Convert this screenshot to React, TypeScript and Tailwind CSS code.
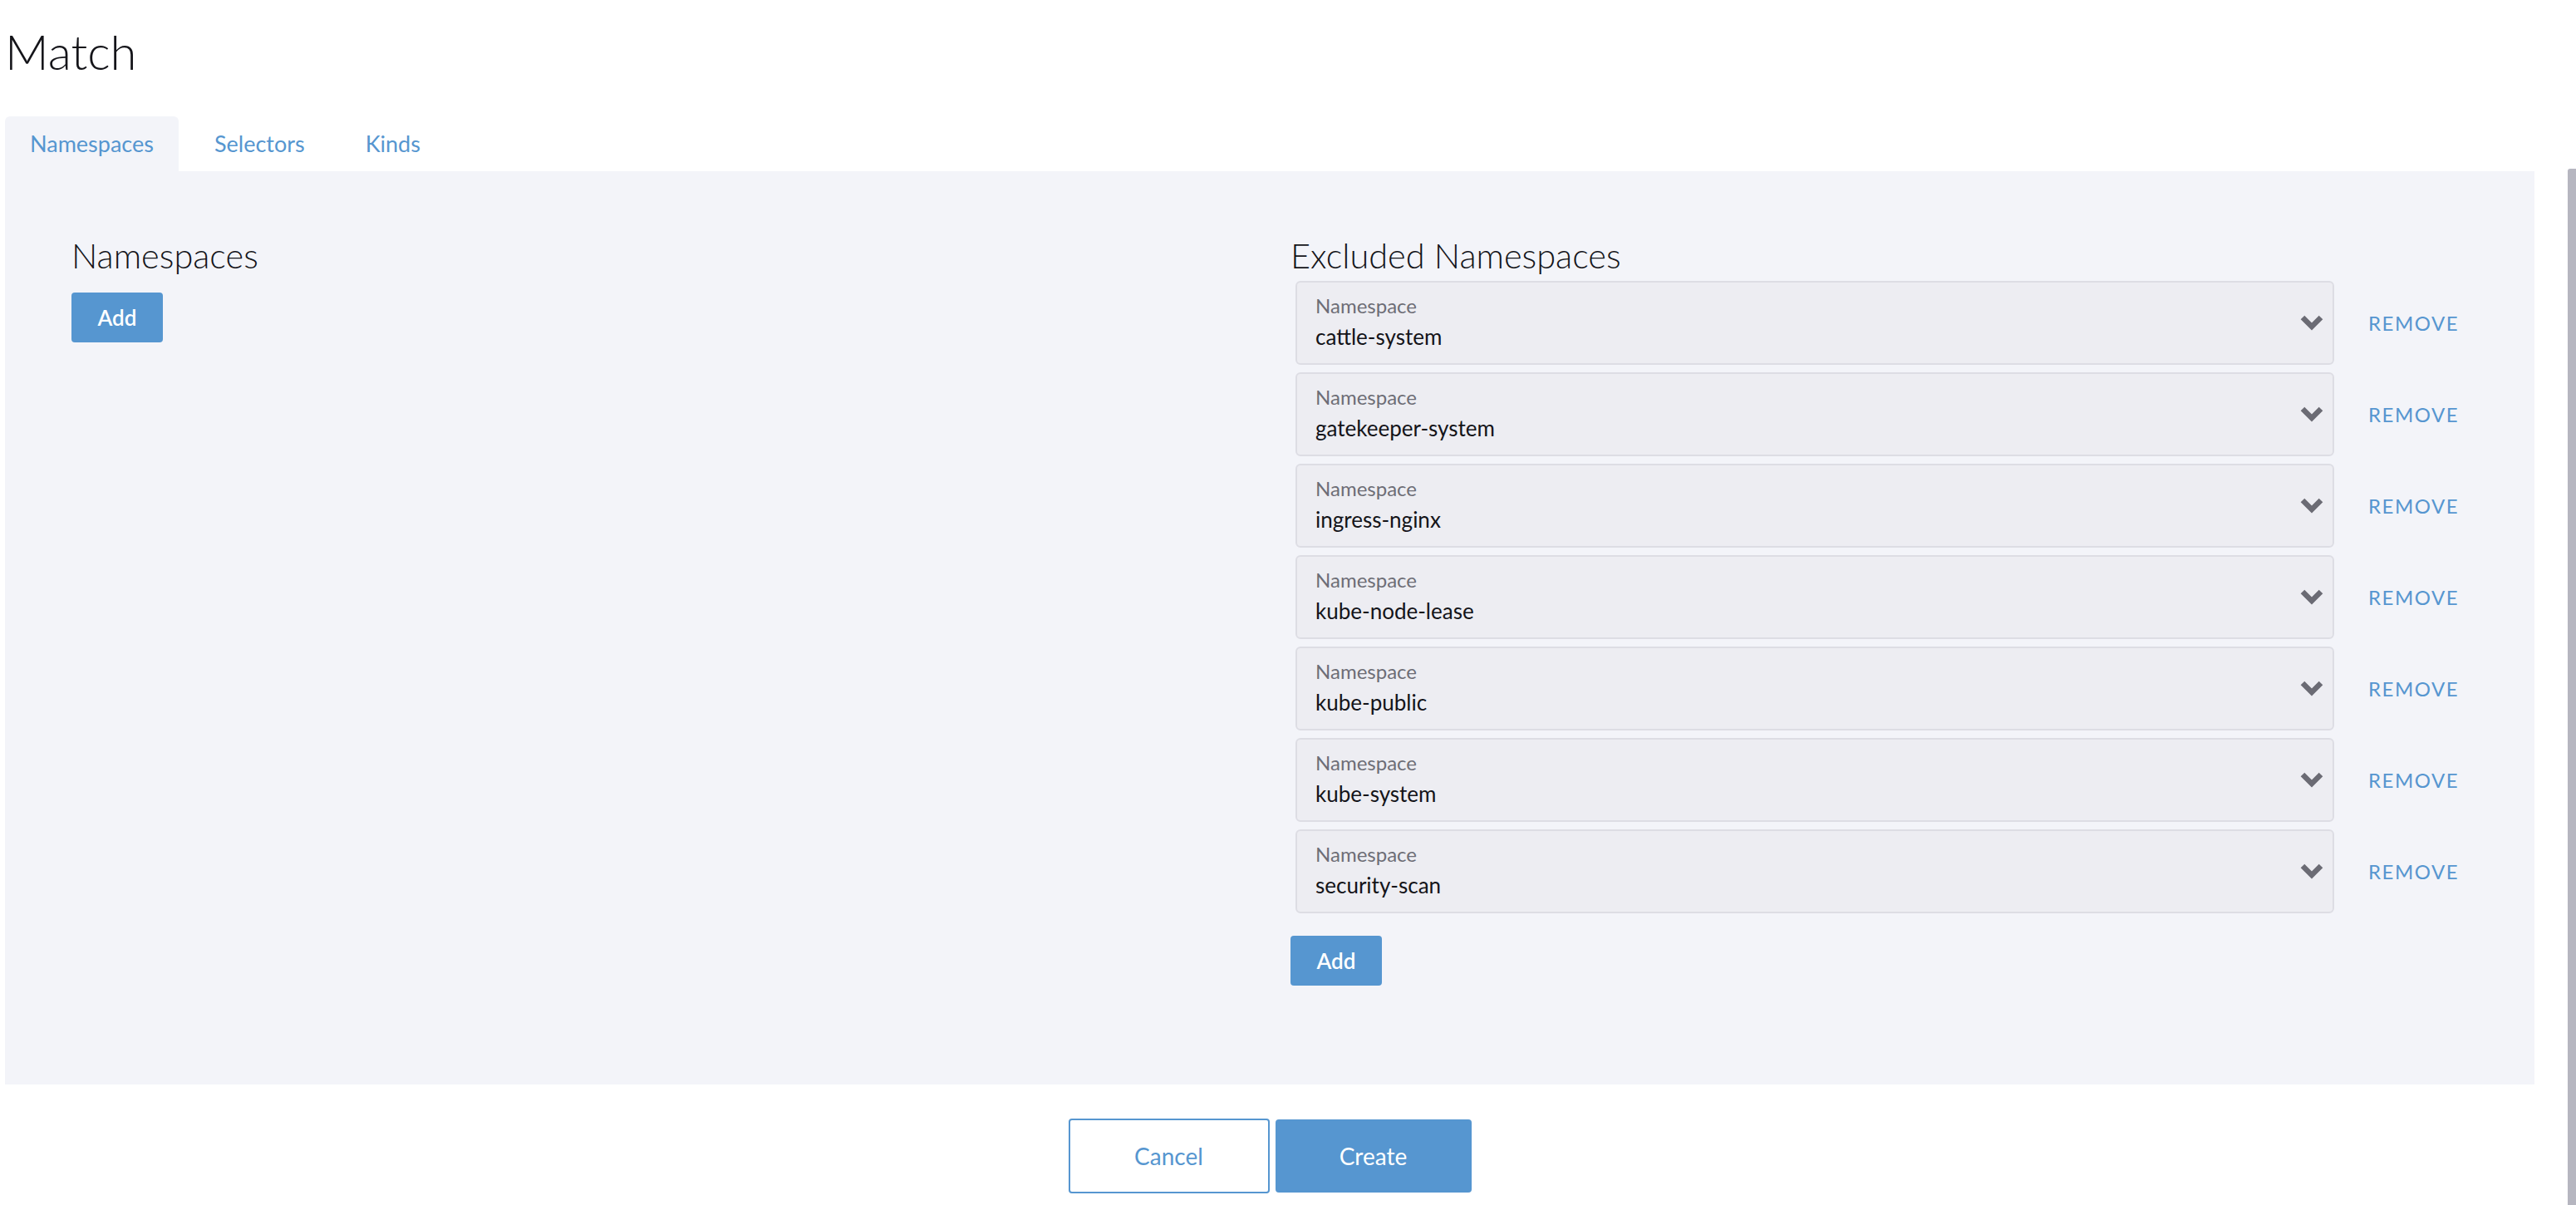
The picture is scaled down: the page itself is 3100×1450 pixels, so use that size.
import { useState } from "react";

const excluded = [
  "cattle-system",
  "gatekeeper-system",
  "ingress-nginx",
  "kube-node-lease",
  "kube-public",
  "kube-system",
  "security-scan",
];

const tabs = ["Namespaces", "Selectors", "Kinds"];

const Chevron = () => (
  <svg width="28" height="19" viewBox="0 0 28 19" fill="none">
    <polyline
      points="3,3 14,14 25,3"
      stroke="#6b6b74"
      strokeWidth="6.5"
      strokeLinecap="butt"
      strokeLinejoin="miter"
    />
  </svg>
);

const NamespaceRow = ({ value }: { value: string }) => (
  <div className="mt-[9px] flex first:mt-0">
    <div className="ml-[6px] flex h-[101px] flex-1 items-center justify-between rounded-[6px] border-2 border-[#dddde4] bg-[#ededf2] pl-[22px] pr-[11px]">
      <div className="flex h-full flex-col pt-[13px]">
        <span className="text-[24px] leading-[29px] text-[#6d6d76]">Namespace</span>
        <span className="mt-[8px] text-[26px] leading-[31px] text-[#141419]">{value}</span>
      </div>
      <Chevron />
    </div>
    <div className="flex w-[161px] items-center pl-[41px]">
      <button className="text-[24px] uppercase tracking-[1.5px] text-[#5696d0]">Remove</button>
    </div>
  </div>
);

const App = () => {
  const [activeTab, setActiveTab] = useState("Namespaces");

  return (
    <div className="flex h-[1450px] w-full bg-white font-['Lato',sans-serif]">
      <main className="flex-1 pl-[6px] pr-[40px]">
        <h1 className="mt-[27px] text-[58px] font-light leading-[70px] text-[#141419]">Match</h1>

        <div className="mt-[43px] flex gap-[13px]">
          {tabs.map((tab) => (
            <button
              key={tab}
              onClick={() => setActiveTab(tab)}
              className={
                "flex h-[66px] items-center rounded-t-[6px] px-[30px] text-[27px] text-[#5696d0] " +
                (activeTab === tab ? "bg-[#f3f4f9]" : "bg-transparent")
              }
            >
              {tab}
            </button>
          ))}
        </div>

        <div className="grid h-[1099px] grid-cols-2 gap-x-[50px] bg-[#f3f4f9] px-[80px] pt-[77px]">
          <div>
            <h2 className="text-[41.5px] font-light leading-[49px] text-[#141419]">Namespaces</h2>
            <button className="mt-[20px] h-[60px] w-[110px] rounded-[4px] bg-[#5696d0] text-[26px] font-semibold text-white">
              Add
            </button>
          </div>

          <div>
            <h2 className="text-[41.5px] font-light leading-[49px] text-[#141419]">Excluded Namespaces</h2>
            <div className="mt-[6px]">
              {excluded.map((ns) => (
                <NamespaceRow key={ns} value={ns} />
              ))}
            </div>
            <button className="mt-[27px] h-[60px] w-[110px] rounded-[4px] bg-[#5696d0] text-[26px] font-semibold text-white">
              Add
            </button>
          </div>
        </div>

        <div className="mt-[41px] flex items-center justify-center gap-[7px]">
          <button className="h-[90px] w-[242px] rounded-[4px] border-2 border-[#5696d0] bg-white text-[28px] text-[#5696d0]">
            Cancel
          </button>
          <button className="h-[88px] w-[236px] rounded-[4px] bg-[#5696d0] text-[28px] text-white">
            Create
          </button>
        </div>
      </main>

      <div className="w-[10px] pt-[203px]">
        <div className="h-full rounded-tl-[3px] bg-[#b6b6c0]" />
      </div>
    </div>
  );
};

export default App;
